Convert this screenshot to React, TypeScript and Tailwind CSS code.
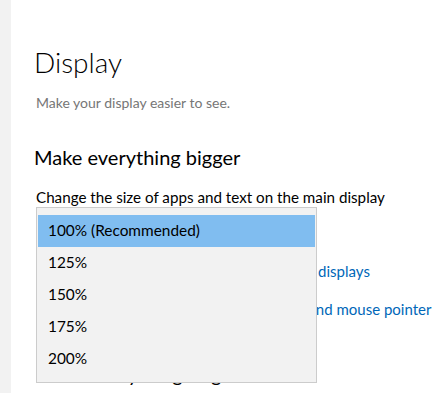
const options = ['100% (Recommended)', '125%', '150%', '175%', '200%'];

const App = () => (
  <div className="flex h-[393px] w-[438px] overflow-hidden bg-white font-['Lato',sans-serif] text-black">
    <div className="w-[11px] shrink-0 bg-[#f2f2f2]" />
    <main className="flex-1 pl-[23px] pt-[44px]">
      <h1 className="text-[28px] font-light leading-[36px]">Display</h1>
      <p className="mt-[13px] pl-[2px] text-[14px] leading-[20px] text-[#767676]">Make your display easier to see.</p>
      <h2 className="mt-[30px] text-[20px] leading-[28px]">Make everything bigger</h2>
      <div className="relative mt-[15px] pl-[2px]">
        <p className="whitespace-nowrap text-[15.2px] leading-[22px]">Change the size of apps and text on the main display</p>
        <div className="mt-[8px] h-[32px] w-[280px] border-2 border-[#999] bg-white" />
        <div className="mt-[12px] flex flex-col gap-[16px] whitespace-nowrap pl-[5px] text-[15px] leading-[22px] text-[#0067b8]">
          <a href="#">Change the size of apps and text on other displays</a>
          <a href="#">Change the size and color of your cursor and mouse pointer</a>
        </div>
        <h2 className="mt-[40px] text-[20px] leading-[28px]">Make everything brighter</h2>
        <ul className="absolute left-[2px] top-[21px] w-[281px] border border-[#cccccc] bg-[#f2f2f2] pb-[7px] pt-[7px] text-[15.4px]">
          {options.map((o, i) => (
            <li
              key={o}
              className={`mx-px flex h-[32px] items-center px-[10px] ${i === 0 ? 'bg-[#80bdf0]' : ''}`}
            >
              {o}
            </li>
          ))}
        </ul>
      </div>
    </main>
  </div>
);

export default App;
